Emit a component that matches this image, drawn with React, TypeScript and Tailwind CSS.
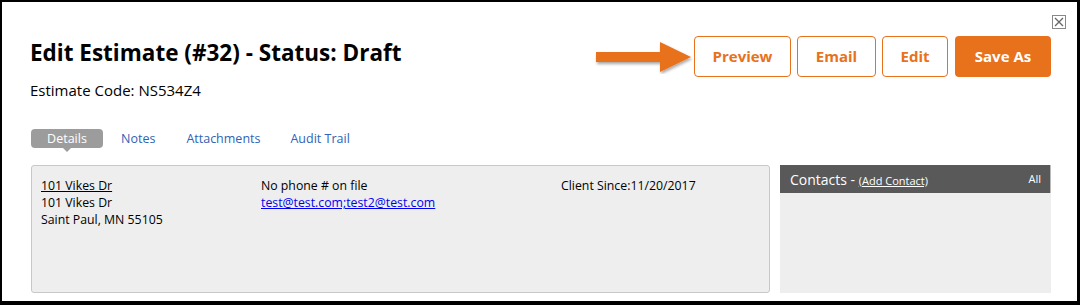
export default function App() {
  return (
    <div
      className="h-[305px] w-[1080px] overflow-hidden bg-black pt-[2px] pr-[3px] pb-[4px] pl-[2px]"
      style={{ fontFamily: '"Open Sans", "Noto Sans", sans-serif' }}
    >
      <div className="relative h-full w-full bg-white">
        {/* close */}
        <div className="absolute top-[13px] right-[11px] flex h-[14px] w-[14px] items-center justify-center border border-[#888] bg-white">
          <svg width="10" height="10" viewBox="0 0 10 10">
            <path d="M1 1 L9 9 M9 1 L1 9" stroke="#666" strokeWidth="1.3" />
          </svg>
        </div>

        <div className="flex items-start justify-between pr-[26px] pl-[28px]">
          <div className="pt-[35px]">
            <h1 className="text-[22.5px] leading-[32px] font-bold text-black">
              Edit Estimate (#32) - Status: Draft
            </h1>
            <p className="mt-[11px] text-[15px] leading-[20px] text-black">
              Estimate Code: NS534Z4
            </p>
          </div>

          <div className="flex items-center pt-[34px]">
            <svg width="100" height="34" viewBox="0 0 100 34">
              <defs>
                <filter id="sh" x="-10%" y="-20%" width="130%" height="160%">
                  <feDropShadow dx="1" dy="2" stdDeviation="1.5" floodColor="#000" floodOpacity="0.35" />
                </filter>
              </defs>
              <path
                d="M2 12 H66 V2 L97 17 L66 32 V22 H2 Z"
                fill="#e8711c"
                filter="url(#sh)"
              />
            </svg>
            <div className="flex gap-[6px]">
              {["Preview", "Email", "Edit"].map((b, i) => (
                <button
                  key={b}
                  className={`h-[41px] rounded-[4px] border border-[#e8711c] bg-white text-[15px] font-bold text-[#e8711c] ${
                    i === 0 ? "w-[97px]" : i === 1 ? "w-[79px]" : "w-[66px]"
                  }`}
                >
                  {b}
                </button>
              ))}
              <button className="ml-[1px] h-[41px] w-[96px] rounded-[4px] bg-[#e8711c] text-[15px] font-bold text-white">
                Save As
              </button>
            </div>
          </div>
        </div>

        {/* tabs */}
        <div className="mt-[29px] flex items-center pl-[29px] text-[12.5px] leading-[19px]">
          <div className="relative w-[72px] rounded-[4px] bg-[#9c9c9c] text-center text-white">
            Details
            <span className="absolute top-full left-1/2 -ml-[4px] h-0 w-0 border-t-[4px] border-r-[4px] border-l-[4px] border-t-[#9c9c9c] border-r-transparent border-l-transparent" />
          </div>
          <span className="ml-[18px] text-[#2d63b8]">Notes</span>
          <span className="ml-[31px] text-[#2d63b8]">Attachments</span>
          <span className="ml-[30px] text-[#2d63b8]">Audit Trail</span>
        </div>

        {/* content */}
        <div className="mt-[17px] flex gap-[10px] pr-[26px] pl-[29px]">
          <div className="grid h-[128px] flex-1 grid-cols-[220px_300px_1fr] rounded-[3px] border border-[#c8c8c8] bg-[#eeeeee] px-[9px] pt-[11px] text-[12.3px] leading-[17px] text-black">
            <div>
              <div className="underline">101 Vikes Dr</div>
              <div>101 Vikes Dr</div>
              <div>Saint Paul, MN 55105</div>
            </div>
            <div>
              <div>No phone # on file</div>
              <div className="text-[#0000ee] underline">test@test.com;test2@test.com</div>
            </div>
            <div>Client Since:11/20/2017</div>
          </div>
          <div className="flex h-[128px] w-[271px] flex-col bg-[#eeeeee]">
            <div className="flex h-[28px] items-center justify-between border-r border-[#bbb] bg-[#595959] pr-[9px] pl-[10px] text-white">
              <span className="text-[14px]">
                Contacts -{" "}
                <span className="text-[11px] underline">(Add Contact)</span>
              </span>
              <span className="text-[11px]">All</span>
            </div>
          </div>
        </div>
      </div>
    </div>
  );
}
